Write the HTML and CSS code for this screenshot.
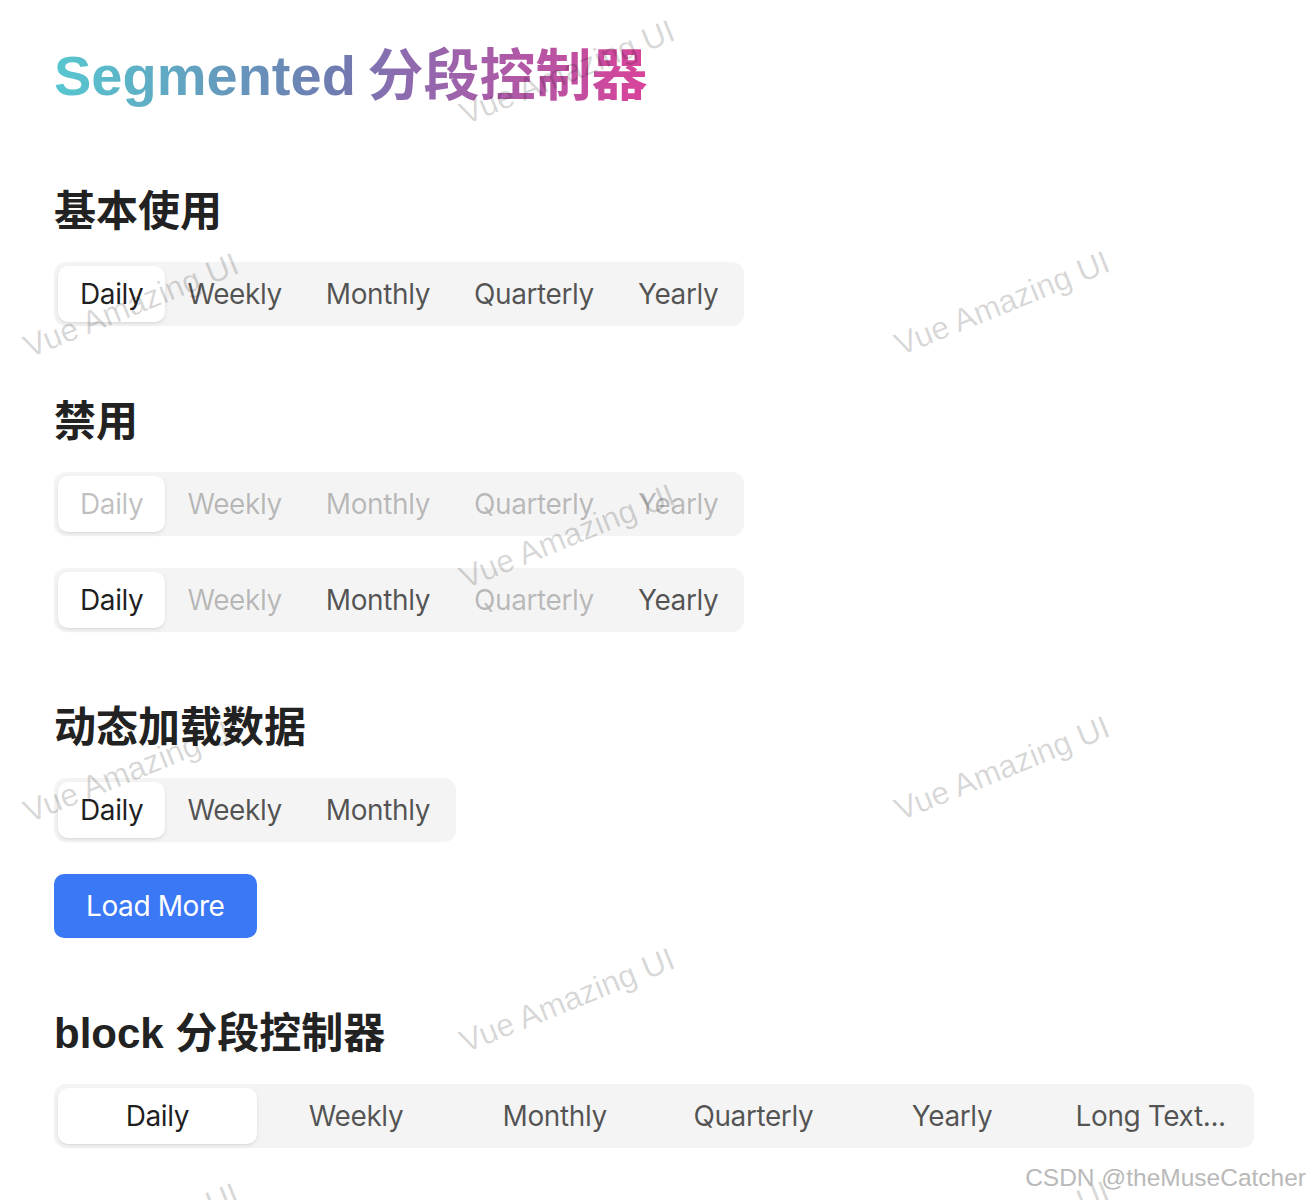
FILE: index.html
```html
<!DOCTYPE html>
<html lang="zh-CN">
<head>
<meta charset="utf-8">
<title>Segmented 分段控制器</title>
<link rel="stylesheet" href="styles.css">
</head>
<body>
<main class="page">
  <h1 class="title"><span class="title-text">Segmented 分段控制器</span></h1>

  <section class="section">
    <h2 class="heading">基本使用</h2>
    <div class="stack">
      <div class="segmented">
        <div class="seg-item is-selected">Daily</div>
        <div class="seg-item">Weekly</div>
        <div class="seg-item">Monthly</div>
        <div class="seg-item">Quarterly</div>
        <div class="seg-item">Yearly</div>
      </div>
    </div>
  </section>

  <section class="section">
    <h2 class="heading">禁用</h2>
    <div class="stack">
      <div class="segmented is-disabled">
        <div class="seg-item is-selected">Daily</div>
        <div class="seg-item">Weekly</div>
        <div class="seg-item">Monthly</div>
        <div class="seg-item">Quarterly</div>
        <div class="seg-item">Yearly</div>
      </div>
      <div class="segmented">
        <div class="seg-item is-selected">Daily</div>
        <div class="seg-item is-disabled">Weekly</div>
        <div class="seg-item">Monthly</div>
        <div class="seg-item is-disabled">Quarterly</div>
        <div class="seg-item">Yearly</div>
      </div>
    </div>
  </section>

  <section class="section">
    <h2 class="heading">动态加载数据</h2>
    <div class="stack">
      <div class="segmented">
        <div class="seg-item is-selected">Daily</div>
        <div class="seg-item">Weekly</div>
        <div class="seg-item">Monthly</div>
      </div>
      <button class="btn-primary" type="button">Load More</button>
    </div>
  </section>

  <section class="section">
    <h2 class="heading">block 分段控制器</h2>
    <div class="stack stack-block">
      <div class="segmented segmented-block">
        <div class="seg-item is-selected">Daily</div>
        <div class="seg-item">Weekly</div>
        <div class="seg-item">Monthly</div>
        <div class="seg-item">Quarterly</div>
        <div class="seg-item">Yearly</div>
        <div class="seg-item">Long Text...</div>
      </div>
    </div>
  </section>
</main>

<div class="watermark" aria-hidden="true">
  <svg class="watermark-svg" width="1310" height="1200" viewBox="0 0 1310 1200">
    <g class="wm-text">
      <text x="567" y="72" transform="rotate(-22 567 72)">Vue Amazing UI</text>
      <text x="131" y="305" transform="rotate(-22 131 305)">Vue Amazing UI</text>
      <text x="1002" y="303" transform="rotate(-22 1002 303)">Vue Amazing UI</text>
      <text x="567" y="536" transform="rotate(-22 567 536)">Vue Amazing UI</text>
      <text x="131" y="770" transform="rotate(-22 131 770)">Vue Amazing UI</text>
      <text x="1002" y="768" transform="rotate(-22 1002 768)">Vue Amazing UI</text>
      <text x="567" y="1000" transform="rotate(-22 567 1000)">Vue Amazing UI</text>
      <text x="131" y="1235" transform="rotate(-22 131 1235)">Vue Amazing UI</text>
      <text x="1002" y="1233" transform="rotate(-22 1002 1233)">Vue Amazing UI</text>
    </g>
  </svg>
</div>

<div class="csdn-mark">CSDN @theMuseCatcher</div>
</body>
</html>
```

FILE: styles.css
```css
html, body {
  margin: 0;
  padding: 0;
  background: #ffffff;
}

body {
  font-family: Inter, "Noto Sans", "Noto Sans CJK SC", sans-serif;
  color: #1f1f1f;
  position: relative;
  min-height: 1200px;
  overflow: hidden;
}

.page {
  display: flex;
  flex-direction: column;
  align-items: flex-start;
  padding: 42px 56px 0 54px;
  width: 1200px;
}

.title {
  margin: 0 0 6px;
  font-family: "Liberation Sans", "Noto Sans CJK SC", sans-serif;
  font-size: 56px;
  line-height: 68px;
  font-weight: 700;
  word-spacing: -4px;
}

.title-text {
  display: inline-block;
  background-image: linear-gradient(90deg, #56c7cf 0%, #6f7bb0 48%, #8b6cb0 58%, #d8439a 100%);
  -webkit-background-clip: text;
  background-clip: text;
  color: transparent;
}

.section {
  margin-top: 71px;
  display: flex;
  flex-direction: column;
  align-items: flex-start;
  width: 100%;
}

.heading {
  margin: 0 0 25px;
  font-family: "Liberation Sans", "Noto Sans CJK SC", sans-serif;
  font-size: 42px;
  line-height: 50px;
  font-weight: 700;
  color: #222222;
}

.stack {
  display: flex;
  flex-direction: column;
  align-items: flex-start;
  gap: 32px;
}

.stack-block {
  align-self: stretch;
  align-items: stretch;
}

.segmented {
  display: inline-flex;
  padding: 4px;
  background: #f4f4f4;
  border-radius: 12px;
}

.seg-item {
  height: 56px;
  line-height: 56px;
  padding: 0 22px;
  font-size: 28px;
  letter-spacing: -0.4px;
  color: rgba(0, 0, 0, 0.66);
  border-radius: 10px;
  white-space: nowrap;
}

.seg-item.is-selected {
  background: #ffffff;
  color: rgba(0, 0, 0, 0.88);
  box-shadow: 0 2px 5px rgba(0, 0, 0, 0.07), 0 1px 2px rgba(0, 0, 0, 0.05);
}

.seg-item.is-disabled,
.segmented.is-disabled .seg-item {
  color: rgba(0, 0, 0, 0.25);
}

.segmented-block {
  display: flex;
}

.segmented-block .seg-item {
  flex: 1 1 0;
  text-align: center;
  padding: 0 10px;
}

.btn-primary {
  height: 64px;
  padding: 0 32px;
  border: none;
  border-radius: 10px;
  background: #3a78f6;
  color: #ffffff;
  font-family: Inter, "Noto Sans", sans-serif;
  font-size: 28px;
  letter-spacing: -0.4px;
  line-height: 64px;
}

.watermark {
  position: absolute;
  left: 0;
  top: 0;
  width: 1310px;
  height: 1200px;
  pointer-events: none;
}

.watermark-svg {
  display: block;
}

.wm-text text {
  font-family: "Liberation Sans", Arial, sans-serif;
  font-size: 32px;
  fill: rgba(0, 0, 0, 0.16);
  text-anchor: middle;
  dominant-baseline: central;
}

.csdn-mark {
  position: absolute;
  right: 4px;
  top: 1163px;
  font-family: "Liberation Sans", Arial, sans-serif;
  font-size: 24.5px;
  color: #b9b9b9;
  line-height: 30px;
}
```
